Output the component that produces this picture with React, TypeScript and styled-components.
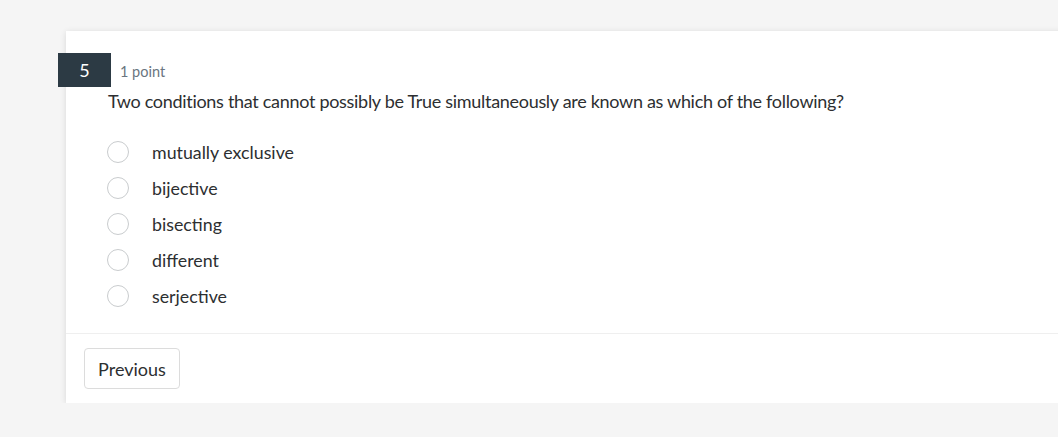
import styled, { createGlobalStyle } from "styled-components";

const GlobalStyle = createGlobalStyle`
  html, body {
    margin: 0;
    padding: 0;
    background: #f5f5f5;
    overflow: hidden;
  }
  body {
    font-family: Lato, "Open Sans", "Liberation Sans", sans-serif;
  }
`;

const Page = styled.div`
  padding: 31px 0 0 66px;
`;

const Card = styled.div`
  width: 1040px;
  background: #fff;
  box-shadow: 0 1px 6px rgba(0, 0, 0, 0.12);
`;

const Body = styled.div`
  padding: 22px 24px 19px 42px;
  border-bottom: 1px solid #efefef;
`;

const Header = styled.div`
  display: flex;
  align-items: center;
  margin-left: -50px;
`;

const Badge = styled.div`
  width: 53px;
  height: 34px;
  background: #2c3a44;
  color: #fff;
  font-size: 18px;
  display: flex;
  align-items: center;
  justify-content: center;
`;

const Points = styled.span`
  margin-left: 9px;
  font-size: 14.5px;
  color: #6a7580;
  padding-top: 3px;
`;

const Question = styled.p`
  margin: 1px 0 0;
  font-size: 18px;
  line-height: 26px;
  color: #2d2f31;
  letter-spacing: -0.3px;
`;

const Options = styled.ul`
  list-style: none;
  margin: 20px 0 0 -1px;
  padding: 0;
`;

const Option = styled.li`
  display: flex;
  align-items: center;
  height: 36px;
`;

const Radio = styled.span`
  width: 20px;
  height: 20px;
  border-radius: 50%;
  border: 1px solid #c9ccce;
  background: #fff;
  flex-shrink: 0;
`;

const Label = styled.span`
  margin-left: 23px;
  font-size: 17.8px;
  color: #2d2f31;
`;

const Footer = styled.div`
  padding: 14px 18px;
`;

const Button = styled.button`
  height: 41px;
  width: 96px;
  padding: 0;
  border: 1px solid #dcdcdc;
  border-radius: 4px;
  background: #fff;
  font-family: inherit;
  font-size: 18px;
  color: #2d2f31;
  cursor: pointer;
`;

const options = ["mutually exclusive", "bijective", "bisecting", "different", "serjective"];

export default function App() {
  return (
    <>
      <GlobalStyle />
      <Page>
        <Card>
          <Body>
            <Header>
              <Badge>5</Badge>
              <Points>1 point</Points>
            </Header>
            <Question>
              Two conditions that cannot possibly be True simultaneously are known as which of the following?
            </Question>
            <Options>
              {options.map((o) => (
                <Option key={o}>
                  <Radio />
                  <Label>{o}</Label>
                </Option>
              ))}
            </Options>
          </Body>
          <Footer>
            <Button>Previous</Button>
          </Footer>
        </Card>
      </Page>
    </>
  );
}
